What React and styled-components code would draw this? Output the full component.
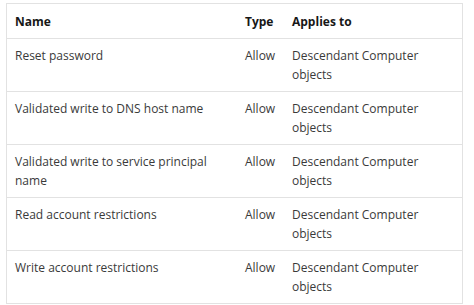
import React from "react";
import styled, { createGlobalStyle } from "styled-components";

const GlobalStyle = createGlobalStyle`
  body {
    margin: 0;
    background: #fff;
    font-family: "Open Sans", "Noto Sans", sans-serif;
  }
`;

const Page = styled.div`
  padding: 3px 0 0 6px;
`;

const Table = styled.table`
  width: 457px;
  border-collapse: collapse;
  border: 1px solid #e2e2e2;
  table-layout: fixed;
  font-size: 12px;
  color: #3a3a3a;
`;

const HeadCell = styled.th`
  width: ${(p) => (p.$w ? `${p.$w}px` : "auto")};
  text-align: left;
  font-weight: 700;
  color: #171717;
  padding: 9px 8px 8px;
  height: 17px;
  line-height: 17px;
`;

const Row = styled.tr`
  border-top: 1px solid #e2e2e2;
`;

const Cell = styled.td`
  vertical-align: top;
  padding: 7px 8px 7px;
  height: 38px;
  line-height: 19px;
`;

const rows = [
  "Reset password",
  "Validated write to DNS host name",
  "Validated write to service principal name",
  "Read account restrictions",
  "Write account restrictions",
];

function App() {
  return (
    <Page>
      <GlobalStyle />
      <Table>
        <thead>
          <tr>
            <HeadCell $w={214}>Name</HeadCell>
            <HeadCell $w={31}>Type</HeadCell>
            <HeadCell>Applies to</HeadCell>
          </tr>
        </thead>
        <tbody>
          {rows.map((name) => (
            <Row key={name}>
              <Cell>{name}</Cell>
              <Cell>Allow</Cell>
              <Cell>Descendant Computer objects</Cell>
            </Row>
          ))}
        </tbody>
      </Table>
    </Page>
  );
}

export default App;
